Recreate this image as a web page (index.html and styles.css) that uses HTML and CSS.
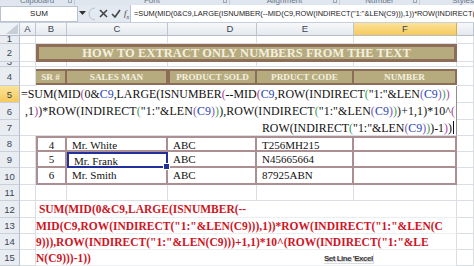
FILE: index.html
```html
<!DOCTYPE html>
<html lang="en">

<head>
  <meta charset="UTF-8">
  <title>Extract only numbers</title>
  <link rel="stylesheet" href="styles.css">
</head>

<body>

  <!-- ribbon group labels (cut off at the top) -->
  <div class="ribbon">
    <div class="grp g1"><span>Clipboard</span><i></i></div>
    <div class="grp g2"><span>Font</span><i></i></div>
    <div class="grp g3"><span>Alignment</span><i></i></div>
    <div class="grp g4"><span>Number</span><i></i></div>
    <div class="grp g5"><span>Styles</span></div>
  </div>

  <!-- formula bar -->
  <div class="fbar">
    <div class="namebox">SUM</div>
    <div class="drop">
      <svg width="7" height="5" viewBox="0 0 7 5"><path d="M0 0h7L3.5 4z" fill="#333" /></svg>
    </div>
    <div class="btns">
      <svg width="8" height="14" viewBox="0 0 8 14"><path d="M7 1a6 6 0 0 0 0 12" fill="none" stroke="#b8c0cc" stroke-width="1" /></svg>
      <svg width="9" height="9" viewBox="0 0 9 9"><path d="M1 1l7 7M8 1l-7 7" stroke="#444" stroke-width="1.6" /></svg>
      <svg width="10" height="9" viewBox="0 0 10 9"><path d="M1 5l3 3 5-7" fill="none" stroke="#444" stroke-width="1.6" /></svg>
      <span class="fx">f<sub>x</sub></span>
    </div>
    <div class="finput">=SUM(MID(0&amp;C9,LARGE(ISNUMBER(--MID(C9,ROW(INDIRECT("1:"&amp;LEN(C9))),1))*ROW(INDIRECT("1:"&amp;LEN(C9))),ROW(INDIRECT("1:"&amp;LEN(C9)))+1,1)*10^(ROW(INDIRECT("1:"&amp;LEN(C9)))-1))</div>
  </div>

  <!-- sheet -->
  <div class="sheet">
    <!-- column headers -->
    <div class="corner"><svg width="14" height="10" viewBox="0 0 14 10"><path d="M14 0v10H2z" fill="#c9ced6" /></svg></div>
    <div class="ch">A</div>
    <div class="ch">B</div>
    <div class="ch">C</div>
    <div class="ch chd">D</div>
    <div class="ch">E</div>
    <div class="ch on">F</div>
    <div class="ch"></div>

    <!-- 1 -->
    <div class="rh low">1</div>
    <div></div><div></div><div></div><div></div><div></div><div></div><div></div>

    <!-- 2 -->
    <div class="rh">2</div>
    <div></div>
    <div class="title">HOW TO EXTRACT ONLY NUMBERS FROM THE TEXT</div>
    <div></div>

    <!-- 3 -->
    <div class="rh low">3</div>
    <div></div><div></div><div></div><div></div><div></div><div></div><div></div>

    <!-- 4 -->
    <div class="rh">4</div>
    <div></div>
    <div class="th">SR #</div>
    <div class="th">SALES MAN</div>
    <div class="th">PRODUCT SOLD</div>
    <div class="th">PRDUCT CODE</div>
    <div class="th">NUMBER</div>
    <div></div>

    <!-- 5-7 : cell being edited -->
    <div class="rh on">5</div>
    <div class="edit">
      <div class="ln">=SUM(MID<b class="k1">(</b>0&amp;<b class="ref">C9</b>,LARGE(ISNUMBER<b class="k1">(</b>--MID<b class="k1">(</b><b class="ref">C9</b>,ROW(INDIRECT<b class="k2">(</b>"1:"&amp;LEN<b class="k3">(</b><b class="ref">C9</b><b class="k3">)</b><b class="k2">)</b><b class="k1">)</b></div>
      <div class="ln l2">,1<b class="k1">)</b>)*ROW(INDIRECT<b class="k2">(</b>"1:"&amp;LEN<b class="k3">(</b><b class="ref">C9</b><b class="k3">)</b><b class="k2">)</b>),ROW(INDIRECT<b class="k2">(</b>"1:"&amp;LEN<b class="k3">(</b><b class="ref">C9</b><b class="k3">)</b><b class="k2">)</b>)+1,1)*10^<b class="k1">(</b></div>
      <div class="ln l3">ROW(INDIRECT<b class="k2">(</b>"1:"&amp;LEN<b class="k3">(</b><b class="ref">C9</b><b class="k3">)</b><b class="k2">)</b>)-1<b class="k1">)</b>)<span class="caret"></span></div>
    </div>
    <div></div>
    <div class="rh">6</div>
    <div></div>
    <div class="rh">7</div>
    <div></div>

    <!-- 8 -->
    <div class="rh">8</div>
    <div></div>
    <div class="td first top mid">4</div>
    <div class="td top">Mr. White</div>
    <div class="td top">ABC</div>
    <div class="td top">T256MH215</div>
    <div class="td top"></div>
    <div></div>

    <!-- 9 -->
    <div class="rh">9</div>
    <div></div>
    <div class="td first mid">5</div>
    <div class="td sel">Mr. Frank</div>
    <div class="td">ABC</div>
    <div class="td">N45665664</div>
    <div class="td"></div>
    <div></div>

    <!-- 10 -->
    <div class="rh">10</div>
    <div></div>
    <div class="td first mid">6</div>
    <div class="td">Mr. Smith</div>
    <div class="td">ABC</div>
    <div class="td">87925ABN</div>
    <div class="td"></div>
    <div></div>

    <!-- 11 -->
    <div class="rh">11</div>
    <div></div><div></div><div></div><div></div><div></div><div></div><div></div>

    <!-- 12-15 formula written out in red -->
    <div class="rh">12</div>
    <div></div>
    <div class="red r1"> SUM(MID(0&amp;C9,LARGE(ISNUMBER(--</div>
    <div></div>
    <div class="rh">13</div>
    <div></div>
    <div class="red">MID(C9,ROW(INDIRECT("1:"&amp;LEN(C9))),1))*ROW(INDIRECT("1:"&amp;LEN(C</div>
    <div></div>
    <div class="rh">14</div>
    <div></div>
    <div class="red">9))),ROW(INDIRECT("1:"&amp;LEN(C9)))+1,1)*10^(ROW(INDIRECT("1:"&amp;LE</div>
    <div></div>
    <div class="rh">15</div>
    <div></div>
    <div class="red">N(C9)))-1))</div>
    <div></div>

    <div class="mark">Set Line 'Excel</div>
  </div>

</body>

</html>
```

FILE: styles.css
```css
* {
  padding: 0;
  margin: 0;
  box-sizing: border-box;
}

html {
  -webkit-text-size-adjust: none;
  text-size-adjust: none;
}

html,
body {
  width: 474px;
  height: 266px;
  overflow: hidden;
  background: #fff;
  font-family: "Liberation Sans", Arial, sans-serif;
}

/* ribbon labels */
.ribbon {
  display: flex;
  height: 5px;
  overflow: hidden;
  background: #dfe6ef;
}

.grp {
  position: relative;
  display: flex;
  justify-content: center;
  border-right: 1px solid #c3ccd8;
  font-size: 8px;
  line-height: 1px;
  color: #6a7688;
}

.grp i {
  position: absolute;
  right: 2px;
  top: 0;
  width: 4px;
  height: 3px;
  border: 1px solid #9aa6b6;
  border-top: none;
}

.g1 { width: 75px; }
.g2 { width: 155px; }
.g3 { width: 110px; }
.g4 { width: 80px; }
.g5 { flex: 1; border-right: none; justify-content: flex-end; }

/* formula bar */
.fbar {
  display: flex;
  align-items: center;
  height: 18px;
  background: #e3e9f1;
  border-bottom: 1px solid #c6cfdb;
}

.namebox {
  width: 78px;
  height: 16px;
  background: #fff;
  border: 1px solid #b9c3d0;
  font-size: 8px;
  line-height: 14px;
  text-align: center;
  color: #222;
}

.drop {
  display: flex;
  width: 8px;
  justify-content: center;
}

.btns {
  display: flex;
  align-items: center;
  gap: 3px;
  width: 44px;
  padding-left: 2px;
}

.fx {
  font: italic 9px "Liberation Serif", serif;
  color: #444;
}

.fx sub {
  font-size: 6px;
}

.finput {
  flex: 1;
  height: 17px;
  background: #fff;
  border-left: 1px solid #b9c3d0;
  padding-left: 3px;
  font-size: 7.4px;
  line-height: 17px;
  white-space: nowrap;
  overflow: hidden;
  color: #222;
}

/* sheet grid */
.sheet {
  position: relative;
  display: grid;
  grid-template-columns: 20px 16px 31px 101px 89px 97px 103px 17px;
  grid-template-rows: 13px 8px 18px 5px 19px 17px 17px 16px 16px 16px 17px 16px 17px 16px 16px 16px;
  height: 243px;
  overflow: hidden;
}

.sheet > div {
  border-right: 1px solid #dadde1;
  border-bottom: 1px solid #dadde1;
  overflow: hidden;
}

.corner {
  background: #eef1f5;
  display: flex;
  align-items: flex-end;
  justify-content: flex-end;
  padding: 0 1px 1px 0;
}

.sheet .corner,
.sheet .ch {
  border-right: 1px solid #bcc5d0;
  border-bottom: 1px solid #b3bcc8;
}

.ch {
  background: linear-gradient(#f7f8fa, #e5e9ee);
  font-size: 9.5px;
  line-height: 12px;
  text-align: center;
  color: #3a4556;
}

.chd {
  padding-left: 36px;
}

.sheet .ch.on {
  background: linear-gradient(#fbe39a, #f6c95a);
  border-right-color: #d8ad4e;
}

.sheet .rh {
  background: #e9edf2;
  border-right: 1px solid #b3bcc8;
  border-bottom: 1px solid #c9d0d9;
  font-size: 9.5px;
  text-align: center;
  color: #3a4556;
  display: flex;
  align-items: center;
  justify-content: center;
}

.sheet .rh.low {
  align-items: flex-end;
  line-height: 9px;
}

.sheet .rh.on {
  background: linear-gradient(#fbe39a, #f6c95a);
}

/* table */
.sheet .title {
  grid-column: span 5;
  background: #b6ab7f;
  border: 3px solid #8d6c58;
  font: bold 12.4px "Liberation Serif", serif;
  line-height: 12px;
  text-align: center;
  color: #f4efdf;
  letter-spacing: 0.1px;
}

.sheet .th {
  margin: 2px 0 1px;
  background: #b6ab7f;
  border: 2px solid #8d6c58;
  border-left: none;
  font: bold 9.2px "Liberation Serif", serif;
  line-height: 12px;
  text-align: center;
  color: #f4efdf;
}

.sheet .th:nth-child(3n) {
  border-left: 2px solid #8d6c58;
}

.sheet .edit {
  grid-column: 2 / 8;
  grid-row: span 3;
  background: #fff;
  border-right: 1px solid #8e8e8e;
  border-bottom: 1px solid #dadde1;
  font: 11.9px "Liberation Serif", serif;
  color: #111;
}

.ln {
  height: 17px;
  line-height: 17px;
  white-space: nowrap;
  padding-left: 1px;
}

.l2 {
  padding-left: 5px;
  letter-spacing: 0.1px;
}

.l3 {
  text-align: right;
  padding-right: 2px;
}

.ln b {
  font-weight: normal;
}

.k1 { color: #a8459a; }
.k2 { color: #3f9d58; }
.k3 { color: #7a58b5; }
.ref { color: #2a44b8; }

.caret {
  display: inline-block;
  width: 1px;
  height: 13px;
  margin-left: 1px;
  vertical-align: -2px;
  background: #111;
}

.sheet .td {
  border-right: 2px solid #ac8f92;
  border-bottom: 2px solid #ac8f92;
  font: 11px "Liberation Serif", serif;
  line-height: 14px;
  padding-left: 5px;
  color: #111;
  white-space: nowrap;
}

.sheet .td.first {
  border-left: 2px solid #ac8f92;
}

.sheet .td.top {
  border-top: 2px solid #ac8f92;
}

.sheet .td.mid {
  text-align: center;
  padding-left: 0;
}

.sheet .td.sel {
  position: relative;
  border: 2px solid #22309c;
  overflow: visible;
  padding-left: 5px;
}

.sel::after {
  content: "";
  position: absolute;
  right: -4px;
  bottom: -4px;
  width: 5px;
  height: 5px;
  background: #22309c;
  border: 1px solid #fff;
}

.sheet .red {
  grid-column: 3 / 8;
  font: bold 11.5px "Liberation Serif", serif;
  line-height: 16px;
  color: #cf1424;
  white-space: pre;
  overflow: visible;
  border-bottom-color: #eceef0;
}

.mark {
  position: absolute;
  left: 324px;
  top: 231px;
  font: bold 8px "Liberation Sans", Arial, sans-serif;
  letter-spacing: -0.5px;
  color: #3a3a3a;
  text-shadow: 0 0 2px #fff, 1px 1px 1px #bbb;
}
```
